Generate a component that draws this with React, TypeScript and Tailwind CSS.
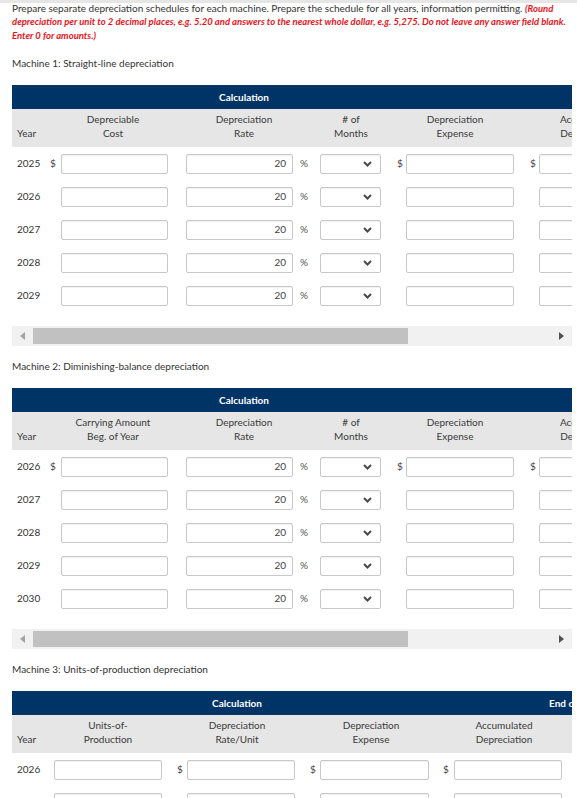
import React from "react";

const inputCls =
  "h-[20px] border border-[#c8c8c8] rounded-[2px] bg-white shadow-[inset_0_1px_1px_rgba(0,0,0,0.06)]";

function Box({ w, value }: { w: number; value?: string }) {
  return (
    <div
      className={`${inputCls} flex items-center justify-end pr-[6px] text-[10px] text-[#444] shrink-0`}
      style={{ width: w }}
    >
      {value}
    </div>
  );
}

function Select() {
  return (
    <div className={`${inputCls} w-[61px] flex items-center justify-end pr-[8px] shrink-0`}>
      <svg width="9" height="6" viewBox="0 0 9 6">
        <polyline points="1,1 4.5,4.5 8,1" fill="none" stroke="#4a4a4a" strokeWidth="2" />
      </svg>
    </div>
  );
}

function Dollar({ show, w }: { show: boolean; w: number }) {
  return (
    <span className="text-[10px] text-[#444] shrink-0" style={{ width: w }}>
      {show ? "$" : ""}
    </span>
  );
}

function Scrollbar() {
  return (
    <div className="mt-[14px] h-[20px] w-[560px] bg-[#f1f1f1] flex items-center">
      <div className="w-[21px] h-[20px] flex items-center pl-[8px]">
        <div className="w-0 h-0 border-y-[4px] border-y-transparent border-r-[5px] border-r-[#a3a3a3]" />
      </div>
      <div className="w-[375px] h-[16px] bg-[#c1c1c1]" />
      <div className="flex-1" />
      <div className="w-[17px] h-[20px] flex items-center pl-[4px]">
        <div className="w-0 h-0 border-y-[4px] border-y-transparent border-l-[5px] border-l-[#505050]" />
      </div>
    </div>
  );
}

function HeadCell({ w, lines, left }: { w: number; lines: string[]; left?: boolean }) {
  return (
    <div
      className={`shrink-0 flex flex-col ${left ? "items-start pl-[5px]" : "items-center"}`}
      style={{ width: w }}
    >
      {lines.map((l, i) => (
        <span key={i} className="whitespace-nowrap">
          {l}
        </span>
      ))}
    </div>
  );
}

function DeprTable({ costLabel, years }: { costLabel: string[]; years: string[] }) {
  return (
    <div className="mt-[14.5px] w-[560px] overflow-hidden">
      <div className="w-[800px]">
        <div className="h-[24px] bg-[#003366] flex items-center text-white font-bold text-[10px]">
          <div className="w-[164px] shrink-0" />
          <div className="w-[136px] shrink-0 text-center">Calculation</div>
          <div className="w-[208px] shrink-0" />
          <div className="w-[282px] shrink-0 text-center">End of Year</div>
        </div>
        <div className="h-[38px] bg-[#e6e6e6] flex items-end pb-[7px] text-[10px] leading-[13.5px] text-[#3a3a3a]">
          <HeadCell w={38} lines={["Year"]} left />
          <HeadCell w={126} lines={costLabel} />
          <HeadCell w={136} lines={["Depreciation", "Rate"]} />
          <HeadCell w={78} lines={["# of", "Months"]} />
          <HeadCell w={130} lines={["Depreciation", "Expense"]} />
          <HeadCell w={137} lines={["Accumulated", "Depreciation"]} />
          <HeadCell w={145} lines={["Book", "Value"]} />
        </div>
        {years.map((y, i) => (
          <div key={y} className="h-[33px] flex items-center text-[10px]">
            <div className="w-[38px] shrink-0 pl-[5px]">{y}</div>
            <div className="w-[126px] shrink-0 flex items-center">
              <Dollar show={i === 0} w={11} />
              <Box w={107} />
            </div>
            <div className="w-[136px] shrink-0 flex items-center pl-[10px]">
              <Box w={107} value="20" />
              <span className="ml-[7px] text-[10px] text-[#555]">%</span>
            </div>
            <div className="w-[78px] shrink-0 flex items-center pl-[8px]">
              <Select />
            </div>
            <div className="w-[130px] shrink-0 flex items-center pl-[7px]">
              <Dollar show={i === 0} w={9} />
              <Box w={108} />
            </div>
            <div className="w-[137px] shrink-0 flex items-center pl-[10px]">
              <Dollar show={i === 0} w={9} />
              <Box w={108} />
            </div>
            <div className="w-[145px] shrink-0 flex items-center pl-[10px]">
              <Dollar show={i === 0} w={9} />
              <Box w={108} />
            </div>
          </div>
        ))}
      </div>
    </div>
  );
}

function UnitsTable() {
  const years = ["2026", "2027"];
  return (
    <div className="mt-[14.5px] w-[560px] overflow-hidden">
      <div className="w-[720px]">
        <div className="h-[24px] bg-[#003366] flex items-center text-white font-bold text-[10px]">
          <div className="w-[154px] shrink-0" />
          <div className="w-[142px] shrink-0 text-center">Calculation</div>
          <div className="w-[126px] shrink-0" />
          <div className="w-[280px] shrink-0 text-center">End of Year</div>
        </div>
        <div className="h-[38px] bg-[#e6e6e6] flex items-end pb-[7px] text-[10px] leading-[13.5px] text-[#3a3a3a]">
          <HeadCell w={38} lines={["Year"]} left />
          <HeadCell w={116} lines={["Units-of-", "Production"]} />
          <HeadCell w={142} lines={["Depreciation", "Rate/Unit"]} />
          <HeadCell w={126} lines={["Depreciation", "Expense"]} />
          <HeadCell w={140} lines={["Accumulated", "Depreciation"]} />
          <HeadCell w={140} lines={["Book", "Value"]} />
        </div>
        {years.map((y, i) => (
          <div key={y} className="h-[33px] flex items-center text-[10px]">
            <div className="w-[38px] shrink-0 pl-[5px]">{y}</div>
            <div className="w-[116px] shrink-0 flex items-center pl-[4px]">
              <Box w={108} />
            </div>
            <div className="w-[142px] shrink-0 flex items-center pl-[11px]">
              <Dollar show={i === 0} w={10} />
              <Box w={108} />
            </div>
            <div className="w-[126px] shrink-0 flex items-center pl-[2px]">
              <Dollar show={i === 0} w={10} />
              <Box w={109} />
            </div>
            <div className="w-[140px] shrink-0 flex items-center pl-[9px]">
              <Dollar show={i === 0} w={11} />
              <Box w={108} />
            </div>
            <div className="w-[140px] shrink-0 flex items-center pl-[9px]">
              <Dollar show={i === 0} w={11} />
              <Box w={108} />
            </div>
          </div>
        ))}
      </div>
    </div>
  );
}

export default function App() {
  return (
    <div className="w-[577px] h-[798px] overflow-hidden bg-white font-['Lato',sans-serif] text-[#333] border-t-[3px] border-[#e6e6e6]">
      <div className="px-[12px]">
        <p className="text-[10px] leading-[13.5px] -mt-[1.5px] -mr-[12px]">
          Prepare separate depreciation schedules for each machine. Prepare the schedule for all years, information
          permitting.{" "}
          <span className="text-[#e8141c] font-bold italic text-[9.5px]">
            (Round depreciation per unit to 2 decimal places, e.g. 5.20 and answers to the nearest whole dollar, e.g.
            5,275. Do not leave any answer field blank. Enter 0 for amounts.)
          </span>
        </p>

        <div className="mt-[15px] text-[10px] leading-[13.5px]">Machine 1: Straight-line depreciation</div>
        <DeprTable costLabel={["Depreciable", "Cost"]} years={["2025", "2026", "2027", "2028", "2029"]} />
        <Scrollbar />

        <div className="mt-[14px] text-[10px] leading-[13.5px]">Machine 2: Diminishing-balance depreciation</div>
        <DeprTable
          costLabel={["Carrying Amount", "Beg. of Year"]}
          years={["2026", "2027", "2028", "2029", "2030"]}
        />
        <Scrollbar />

        <div className="mt-[14px] text-[10px] leading-[13.5px]">Machine 3: Units-of-production depreciation</div>
        <UnitsTable />
      </div>
    </div>
  );
}
